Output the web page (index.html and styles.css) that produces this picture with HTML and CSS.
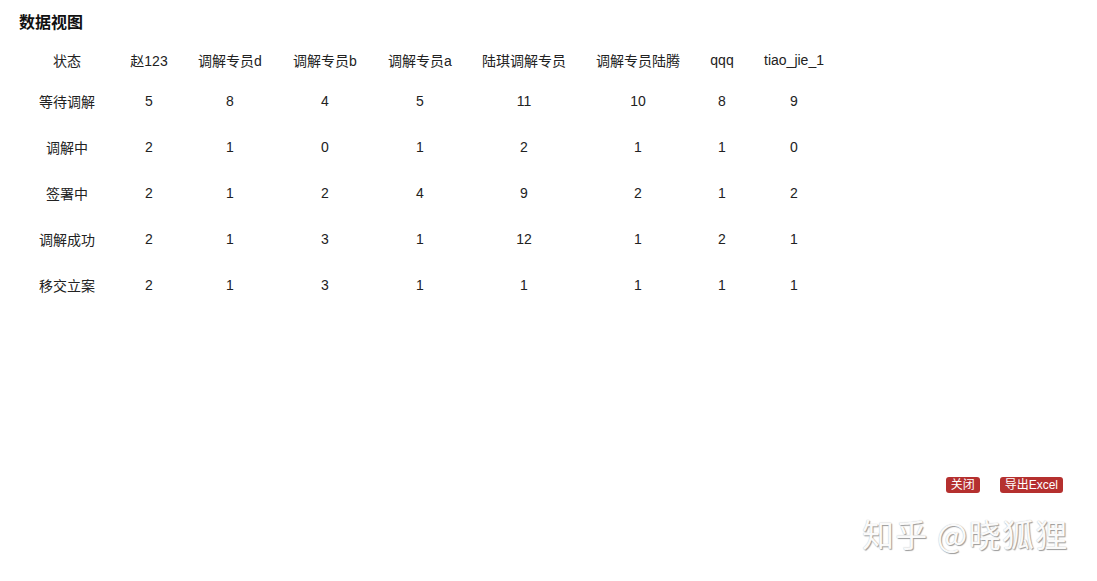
FILE: index.html
```html
<!DOCTYPE html>
<html lang="zh">
<head>
<meta charset="utf-8">
<title>数据视图</title>
<link rel="stylesheet" href="styles.css">
</head>
<body>
<div class="page">
  <h1 class="title">数据视图</h1>
  <table class="data">
    <colgroup>
      <col class="c-status">
      <col class="c-68">
      <col class="c-94">
      <col class="c-96">
      <col class="c-94">
      <col class="c-114">
      <col class="c-114">
      <col class="c-54">
      <col class="c-90">
    </colgroup>
    <thead>
      <tr><th>状态</th><th>赵123</th><th>调解专员d</th><th>调解专员b</th><th>调解专员a</th><th>陆琪调解专员</th><th>调解专员陆腾</th><th>qqq</th><th>tiao_jie_1</th></tr>
    </thead>
    <tbody>
      <tr><td>等待调解</td><td>5</td><td>8</td><td>4</td><td>5</td><td>11</td><td>10</td><td>8</td><td>9</td></tr>
      <tr><td>调解中</td><td>2</td><td>1</td><td>0</td><td>1</td><td>2</td><td>1</td><td>1</td><td>0</td></tr>
      <tr><td>签署中</td><td>2</td><td>1</td><td>2</td><td>4</td><td>9</td><td>2</td><td>1</td><td>2</td></tr>
      <tr><td>调解成功</td><td>2</td><td>1</td><td>3</td><td>1</td><td>12</td><td>1</td><td>2</td><td>1</td></tr>
      <tr><td>移交立案</td><td>2</td><td>1</td><td>3</td><td>1</td><td>1</td><td>1</td><td>1</td><td>1</td></tr>
    </tbody>
  </table>
  <div class="actions">
    <button class="btn">关闭</button>
    <button class="btn">导出Excel</button>
  </div>
</div>
<div class="watermark">知乎 @晓狐狸</div>
</body>
</html>
```
FILE: styles.css
```css
html, body {
  margin: 0;
  padding: 0;
  background: #fff;
}
body {
  font-family: "Liberation Sans", "Noto Sans CJK SC", sans-serif;
  color: #222;
  width: 1097px;
  height: 581px;
  position: relative;
  overflow: hidden;
}
.page {
  padding: 14px 34px 0 19px;
}
.title {
  margin: 0 0 9px 0;
  font-size: 16px;
  line-height: 18px;
  font-weight: bold;
  color: #111;
}
.data {
  border-collapse: collapse;
  table-layout: fixed;
  width: 820px;
  font-size: 14px;
  color: #222;
}
.c-status { width: 96px; }
.c-68 { width: 68px; }
.c-94 { width: 94px; }
.c-96 { width: 96px; }
.c-94 { width: 94px; }
.c-114 { width: 114px; }
.c-54 { width: 54px; }
.c-90 { width: 90px; }
.data th, .data td {
  padding: 0;
  text-align: center;
  font-weight: normal;
  white-space: nowrap;
}
.data th {
  height: 37px;
}
.data td {
  height: 46px;
}
.actions {
  margin-top: 169px;
  display: flex;
  justify-content: flex-end;
  gap: 20px;
}
.btn {
  font-family: "Liberation Sans", "Noto Sans CJK SC", sans-serif;
  font-size: 12px;
  line-height: 16px;
  height: 16px;
  padding: 0 5px;
  border: none;
  border-radius: 3px;
  background: #b5302f;
  color: #fff;
}
.watermark {
  position: absolute;
  left: 862px;
  top: 513px;
  font-family: "Noto Sans CJK SC", sans-serif;
  font-size: 32px;
  line-height: 40px;
  color: #fafafa;
  text-shadow: 1px 1px 1px #9a9a9a, 0 0 1px #bbb;
  letter-spacing: 1.3px;
}
```
